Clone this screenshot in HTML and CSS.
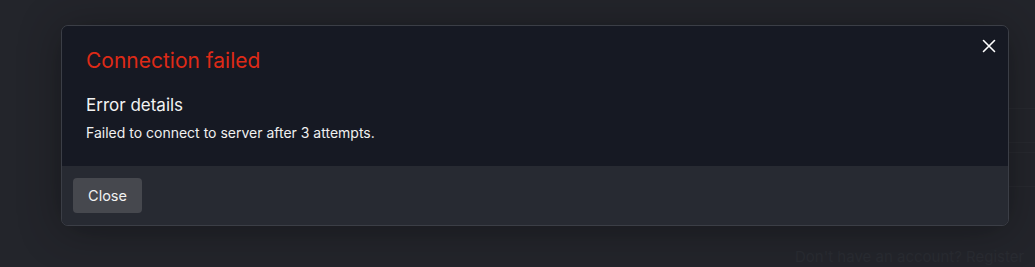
FILE: index.html
```html
<!DOCTYPE html>
<html lang="en">
<head>
<meta charset="utf-8">
<title>Connection failed</title>
<link rel="stylesheet" href="styles.css">
</head>
<body>
<div class="page">
  <div class="login">
    <div class="field"></div>
    <div class="field"></div>
    <p class="signup">Don't have an account? Register</p>
  </div>
</div>
<div class="backdrop">
  <div class="modal" role="dialog">
    <div class="modal-body">
      <h2 class="modal-title">Connection failed</h2>
      <h3 class="details-title">Error details</h3>
      <p class="details-text">Failed to connect to server after 3 attempts.</p>
      <button class="close-x" aria-label="Close">
        <svg width="14" height="14" viewBox="0 0 14 14"><path d="M1.5 1.5 L12.5 12.5 M12.5 1.5 L1.5 12.5" stroke="#fff" stroke-width="1.6" stroke-linecap="round" fill="none"/></svg>
      </button>
    </div>
    <div class="modal-footer">
      <button class="btn">Close</button>
    </div>
  </div>
</div>
</body>
</html>
```

FILE: styles.css
```css
* { box-sizing: border-box; }
html, body { margin: 0; height: 100%; }
body {
  background: #25272e;
  font-family: Inter, "Noto Sans", "Liberation Sans", sans-serif;
  color: #fff;
  overflow: hidden;
}
.page {
  height: 100%;
  display: flex;
  justify-content: flex-end;
  overflow: hidden;
}
.login {
  width: 240px;
  padding-top: 108px;
  display: flex;
  flex-direction: column;
  gap: 9px;
  overflow: hidden;
}
.field {
  height: 35px;
  margin-right: -10px;
  border-top: 1px solid #2b2d34;
  border-bottom: 1px solid #2b2d34;
}
.signup {
  margin: 52px 0 0 0;
  font-size: 15px;
  line-height: 18px;
  color: #2d3037;
  white-space: nowrap;
}
.backdrop {
  position: fixed;
  inset: 0;
  padding: 25px 26px 0 61px;
  background: rgba(30, 31, 36, 0.25);
}
.modal {
  height: 201px;
  border: 1px solid #3b3e46;
  border-radius: 7px;
  overflow: hidden;
  display: flex;
  flex-direction: column;
  box-shadow: 0 4px 40px rgba(0, 0, 0, 0.35);
}
.modal-body {
  position: relative;
  flex: 0 0 140px;
  background: #161923;
  padding: 23px 24px 0 24px;
}
.modal-title {
  margin: 0;
  font-size: 21px;
  font-weight: 400;
  line-height: 24px;
  color: #de2a17;
}
.details-title {
  margin: 21px 0 0;
  font-size: 17px;
  font-weight: 400;
  line-height: 22px;
  color: #f2f2f2;
}
.details-text {
  margin: 8px 0 0;
  font-size: 14px;
  line-height: 18px;
  color: #f0f0f0;
}
.close-x {
  position: absolute;
  top: 10px;
  right: 9px;
  width: 20px;
  height: 20px;
  padding: 0;
  border: 0;
  background: none;
  display: flex;
  align-items: center;
  justify-content: center;
  cursor: pointer;
}
.modal-footer {
  flex: 1;
  background: #272a32;
  padding: 12px 11px;
}
.btn {
  height: 35px;
  width: 69px;
  border: 0;
  border-radius: 4px;
  background: #46484e;
  color: #f2f2f2;
  font-family: inherit;
  font-size: 14.5px;
  cursor: pointer;
}
```
